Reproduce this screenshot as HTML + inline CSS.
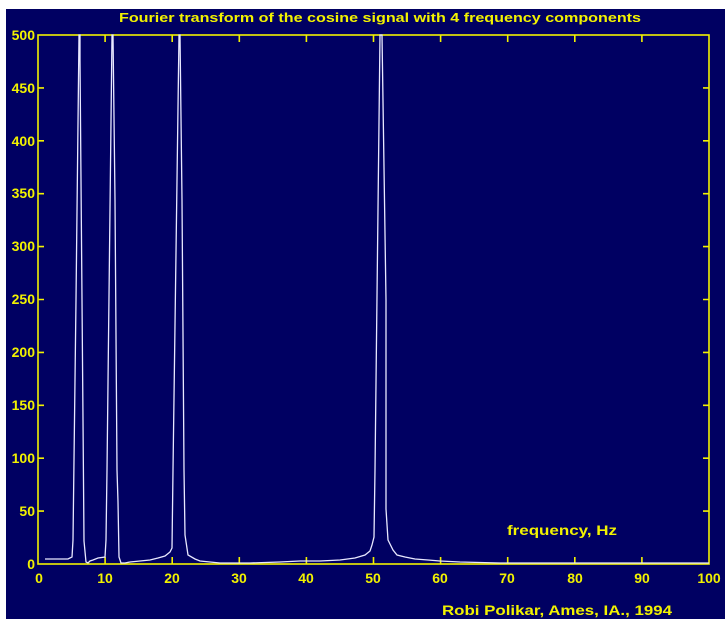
<!DOCTYPE html>
<html><head><meta charset="utf-8"><style>
html,body{margin:0;padding:0;background:#fff;width:725px;height:619px;overflow:hidden}
svg{display:block}
text{font-family:"Liberation Sans",sans-serif;font-weight:bold;fill:#f2f200}
</style></head><body>
<svg width="725" height="619" xmlns="http://www.w3.org/2000/svg">
<rect x="6" y="9" width="719" height="610" fill="#000062"/>
<text x="119" y="22" font-size="13" textLength="522" lengthAdjust="spacingAndGlyphs">Fourier transform of the cosine signal with 4 frequency components</text>
<g stroke="#f2f200" stroke-width="1.6" fill="none">
<rect x="38" y="35" width="671" height="529"/>
<path d="M38 511.1h6M38 458.2h6M38 405.3h6M38 352.4h6M38 299.5h6M38 246.6h6M38 193.7h6M38 140.8h6M38 87.9h6
M709 511.1h-6M709 458.2h-6M709 405.3h-6M709 352.4h-6M709 299.5h-6M709 246.6h-6M709 193.7h-6M709 140.8h-6M709 87.9h-6
M105.1 564v-7M172.2 564v-7M239.3 564v-7M306.4 564v-7M373.5 564v-7M440.6 564v-7M507.7 564v-7M574.8 564v-7M641.9 564v-7
M105.1 35v7M172.2 35v7M239.3 35v7M306.4 35v7M373.5 35v7M440.6 35v7M507.7 35v7M574.8 35v7M641.9 35v7"/>
</g>
<g font-size="14" text-anchor="end">
<text x="35" y="569">0</text><text x="35" y="516">50</text><text x="35" y="463">100</text><text x="35" y="410">150</text><text x="35" y="357">200</text><text x="35" y="304">250</text><text x="35" y="251">300</text><text x="35" y="198">350</text><text x="35" y="146">400</text><text x="35" y="93">450</text><text x="35" y="40">500</text>
</g>
<g font-size="14" text-anchor="middle">
<text x="39" y="583">0</text><text x="105" y="583">10</text><text x="172" y="583">20</text><text x="239" y="583">30</text><text x="306" y="583">40</text><text x="373" y="583">50</text><text x="440" y="583">60</text><text x="507" y="583">70</text><text x="575" y="583">80</text><text x="642" y="583">90</text><text x="709" y="583">100</text>
</g>
<text x="507" y="535" font-size="14" textLength="110" lengthAdjust="spacingAndGlyphs">frequency, Hz</text>
<text x="442" y="615" font-size="14" textLength="230" lengthAdjust="spacingAndGlyphs">Robi Polikar, Ames, IA., 1994</text>
<polyline fill="none" stroke="#e8e8ff" stroke-width="1.3" points="45,559 68,559 72,557 73,540 76,300 79,35 80,35 80,60 82,300 84,541 86,562 88,563 90,561 93,560 98,558 105,557 106,540 107,470 112,35 113,35 115,200 117,470 118,502 119,557 121,563 125,563 130,562 140,561 150,560 158,558 165,556 170,552 172,548 173,470 179,35 180,35 182,200 184,470 185,535 188,555 195,559 200,561 210,562 220,563 250,563 280,562 300,561 320,561 340,560 355,558 365,555 370,551 372,545 374,537 375,470 380,35 382,35 386,300 386,509 388,540 393,550 397,555 405,557 415,559 428,560 440,561 460,562 500,563 709,563"/>
</svg>
</body></html>
